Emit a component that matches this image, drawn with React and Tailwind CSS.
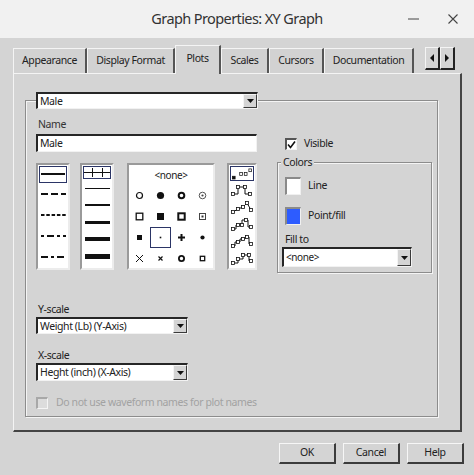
import React from 'react';

const tabs = [
  { label: 'Appearance', w: 'w-[74px]' },
  { label: 'Display Format', w: 'w-[88px]' },
  { label: 'Plots', w: 'w-[46px]', active: true },
  { label: 'Scales', w: 'w-[48px]' },
  { label: 'Cursors', w: 'w-[55px]' },
  { label: 'Documentation', w: 'w-[90px]' },
];

function DownArrow() {
  return (
    <svg width="7" height="4" viewBox="0 0 7 4">
      <path d="M0 0h7L3.5 4z" fill="#111" />
    </svg>
  );
}

function Dropdown({ text, className }) {
  return (
    <div className={`flex bg-white border-t-2 border-l-2 border-r border-b border-t-[#262626] border-l-[#262626] border-r-[#f2f2f2] border-b-[#f2f2f2] ${className}`}>
      <span className="flex-1 self-center truncate pl-[2px] leading-[13px]">{text}</span>
      <div className="flex w-[14px] shrink-0 items-center justify-center border border-t-[#f4f4f4] border-l-[#f4f4f4] border-r-[#3a3a3a] border-b-[#3a3a3a] bg-[#d4d4d4]">
        <DownArrow />
      </div>
    </div>
  );
}

function Check({ checked, disabled }) {
  return (
    <div className={`flex h-[12px] w-[12px] shrink-0 items-center justify-center border-t-2 border-l-2 border-r border-b border-r-[#f4f4f4] border-b-[#f4f4f4] ${disabled ? 'border-t-[#a8a8a8] border-l-[#a8a8a8] bg-[#dcdcdc]' : 'border-t-[#555] border-l-[#555] bg-white'}`}>
      {checked && (
        <svg width="9" height="8" viewBox="0 0 9 8">
          <path d="M1 3.5 L3.5 6.5 L8 0.5" fill="none" stroke="#111" strokeWidth="1.6" />
        </svg>
      )}
    </div>
  );
}

// h and y chosen so lines land on whole pixels
function Dash({ dash, w = 26, sw = 2, h = 5, y = 2 }) {
  return (
    <svg width={w} height={h} viewBox={`0 0 ${w} ${h}`}>
      <line x1="0" y1={y} x2={w} y2={y} stroke="#111" strokeWidth={sw} strokeDasharray={dash} />
    </svg>
  );
}

const sunken = 'border-2 border-t-[#9a9a9a] border-l-[#9a9a9a] border-r-[#ececec] border-b-[#ececec] bg-white overflow-hidden';

function LineStyles() {
  return (
    <div className={`flex w-[34px] flex-col ${sunken}`}>
      <div className="flex h-[19px] items-center justify-center p-px">
        <div className="flex h-full w-full items-center justify-center border border-[#2b3566]">
          <Dash dash="" w={24} />
        </div>
      </div>
      {['7 3', '3.5 1.8', '3 3 7 3', '7 3 3 3'].map((d) => (
        <div key={d} className="flex h-[21px] items-center justify-center">
          <Dash dash={d} w={25} />
        </div>
      ))}
    </div>
  );
}

function LineWidths() {
  return (
    <div className={`flex w-[34px] flex-col ${sunken}`}>
      <div className="flex h-[15px] items-center justify-center p-px">
        <div className="flex h-full w-full items-center justify-center border border-[#2b3566]">
          <svg width="26" height="11" viewBox="0 0 26 11">
            <line x1="0" y1="5.5" x2="26" y2="5.5" stroke="#111" strokeWidth="1" />
            <line x1="8.5" y1="1" x2="8.5" y2="10" stroke="#111" strokeWidth="1" />
            <line x1="18.5" y1="1" x2="18.5" y2="10" stroke="#111" strokeWidth="1" />
          </svg>
        </div>
      </div>
      {[1, 2, 3, 4, 5].map((s) => (
        <div key={s} className="flex h-[17px] items-center justify-center">
          <Dash dash="" w={25} sw={s} h={7} y={s % 2 ? 3.5 : 3} />
        </div>
      ))}
    </div>
  );
}

const symbols = [
  <circle cx="10.5" cy="10.5" r="3" fill="none" stroke="#111" strokeWidth="1.2" />,
  <circle cx="10.5" cy="10.5" r="3.6" fill="#111" />,
  <circle cx="10.5" cy="10.5" r="2.8" fill="none" stroke="#111" strokeWidth="2" />,
  <g><circle cx="10.5" cy="10.5" r="3.3" fill="none" stroke="#555" strokeWidth="1" /><circle cx="10.5" cy="10.5" r="1.1" fill="#444" /></g>,
  <rect x="7.2" y="7.2" width="6.6" height="6.6" fill="none" stroke="#111" strokeWidth="1.3" />,
  <rect x="7" y="7" width="7" height="7" fill="#111" />,
  <rect x="7.3" y="7.3" width="6.4" height="6.4" fill="none" stroke="#111" strokeWidth="2" />,
  <g><rect x="7.5" y="7.5" width="6" height="6" fill="none" stroke="#444" strokeWidth="1" /><rect x="9.5" y="9.5" width="2" height="2" fill="#333" /></g>,
  <rect x="8" y="8" width="5" height="5" fill="#111" />,
  <rect x="9.7" y="9.7" width="1.6" height="1.6" fill="#111" />,
  <path d="M10.5 7v7M7 10.5h7" stroke="#111" strokeWidth="2" />,
  <circle cx="10.5" cy="10.5" r="2.1" fill="#111" />,
  <path d="M7 7l7 7M14 7l-7 7" stroke="#111" strokeWidth="1" />,
  <path d="M8.5 8.5l4 4M12.5 8.5l-4 4" stroke="#111" strokeWidth="1.2" />,
  <circle cx="10.5" cy="10.5" r="2.6" fill="none" stroke="#111" strokeWidth="1.8" />,
  <rect x="8.3" y="8.3" width="4.4" height="4.4" fill="none" stroke="#111" strokeWidth="1.3" />,
];

function PointStyles() {
  return (
    <div className={`flex w-[88px] flex-col ${sunken}`}>
      <div className="flex h-[20px] shrink-0 items-center justify-center text-[10px] text-[#222]">&lt;none&gt;</div>
      <div className="grid grid-cols-4">
        {symbols.map((s, i) => (
          <div key={i} className={`h-[21px] w-[21px] ${i === 9 ? 'border border-[#2b3566]' : ''}`}>
            <svg width="21" height="21" viewBox="0 0 21 21" className={i === 9 ? '-m-px' : ''}>{s}</svg>
          </div>
        ))}
      </div>
    </div>
  );
}

const interps = [
  { pts: [[3, 12], [11, 8], [16, 8], [21, 4]] },
  { pts: [[3, 11], [8, 4], [15, 4], [20, 11]], path: 'M3 11H8V4H15V11H21' },
  { pts: [[3, 12], [8, 9], [13, 7], [17, 3], [21, 10]], path: 'M3 12L8 9L13 7L17 3L21 10' },
  { pts: [[3, 12], [8, 8], [12, 8], [16, 3], [21, 10]], path: 'M3 12H6V8H12V3H18V10H21' },
  { pts: [[3, 12], [8, 8], [13, 5], [17, 3], [21, 10]], path: 'M3 12H5V8H10V5H15V3H19V10H21' },
  { pts: [[3, 12], [8, 8], [13, 4], [19, 4], [21, 10]], path: 'M3 12H8V8H13V4H19V10H21' },
];

function Interp() {
  return (
    <div className={`flex w-[30px] flex-col ${sunken}`}>
      {interps.map((it, i) => (
        <div key={i} className={`flex h-[17px] items-center justify-center ${i === 0 ? 'p-px' : ''}`}>
          <div className={`flex h-full w-full items-center justify-center ${i === 0 ? 'border border-[#2b3566]' : ''}`}>
            <svg width="24" height="15" viewBox="0 0 24 15">
              {it.path && <path d={it.path} fill="none" stroke="#111" strokeWidth="1" />}
              {it.pts.map(([x, y], j) => (
                <rect key={j} x={x - 1.5} y={y - 1.5} width="3" height="3" fill={i === 0 && j === 0 ? '#111' : '#fff'} stroke="#111" strokeWidth="0.8" />
              ))}
            </svg>
          </div>
        </div>
      ))}
    </div>
  );
}

function Swatch({ color }) {
  return <div className={`h-[18px] w-[16px] shrink-0 border-t-2 border-l-2 border-r border-b border-t-[#8a8a8a] border-l-[#8a8a8a] border-r-[#f0f0f0] border-b-[#f0f0f0] ${color}`} />;
}

function Button({ children }) {
  return (
    <div className="flex h-[21px] w-[57px] items-center justify-center border-t border-l border-r-2 border-b-2 border-t-[#f6f6f6] border-l-[#f6f6f6] border-r-[#3c3c3c] border-b-[#3c3c3c] bg-[#d4d4d4] text-[#222]">
      {children}
    </div>
  );
}

export default function App() {
  return (
    <div className="flex h-[475px] w-[474px] flex-col overflow-hidden bg-[#d4d4d4] font-['Noto_Sans','DejaVu_Sans',sans-serif] text-[10.5px] tracking-[-0.4px] text-[#222]">
      {/* title bar */}
      <div className="flex h-[38px] shrink-0 items-center bg-[#f1f1f1]">
        <div className="w-[80px]" />
        <div className="flex-1 text-center text-[14.5px] tracking-[-0.6px] text-[#333]">Graph Properties: XY Graph</div>
        <div className="flex w-[80px] items-center gap-[29px] pl-[14px]">
          <svg width="11" height="2" viewBox="0 0 11 2"><line x1="0" y1="1" x2="11" y2="1" stroke="#444" strokeWidth="1" /></svg>
          <svg width="10" height="10" viewBox="0 0 10 10"><path d="M0.5 0.5l9 9M9.5 0.5l-9 9" stroke="#444" strokeWidth="1.1" /></svg>
        </div>
      </div>

      <div className="flex flex-col pl-[13px] pt-[7px]">
        {/* tabs */}
        <div className="relative z-10 flex h-[28px] items-end">
          {tabs.map((t) => (
            <div
              key={t.label}
              className={`flex ${t.w} items-center justify-center border-t border-l border-r-2 border-t-[#f4f4f4] border-l-[#f4f4f4] border-r-[#555] ${t.active ? 'h-[29px] -mb-px bg-[#d4d4d4] pb-[3px]' : 'h-[25px] bg-[#d2d2d2]'}`}
            >
              {t.label}
            </div>
          ))}
          <div className="mb-[3px] ml-[11px] flex h-[23px] self-end">
            {['M5 0v8L1 4z', 'M1 0v8l4-4z'].map((d) => (
              <div key={d} className="flex w-[15px] items-center justify-center border border-t-[#f4f4f4] border-l-[#f4f4f4] border-r-2 border-b-2 border-r-[#222] border-b-[#222] bg-[#d4d4d4]">
                <svg width="6" height="8" viewBox="0 0 6 8"><path d={d} fill="#111" /></svg>
              </div>
            ))}
          </div>
        </div>

        {/* tab panel */}
        <div className="h-[359px] w-[449px] border-t border-l border-r-2 border-b-2 border-t-[#f4f4f4] border-l-[#f4f4f4] border-r-[#444] border-b-[#444] pl-[11px] pt-[26px]">
          {/* plot group */}
          <div className="relative h-[317px] w-[413px] border border-[#8c8c8c] pl-[10px] pt-[15px] shadow-[inset_1px_1px_0_#f4f4f4,1px_1px_0_#f4f4f4]">
            <Dropdown text="Male" className="absolute left-[10px] top-[-9px] h-[17px] w-[222px]" />

            <div className="flex">
              <div className="flex w-[222px] flex-col">
                <div className="h-[16px] pl-[2px] leading-[16px] text-[#333]">Name</div>
                <div className="mt-[2px] flex h-[18px] w-[221px] items-center border-t-2 border-l-2 border-r border-b border-t-[#262626] border-l-[#262626] border-r-[#f2f2f2] border-b-[#f2f2f2] bg-white pl-[2px]">
                  Male
                </div>
                <div className="mt-[11px] flex h-[107px]">
                  <LineStyles />
                  <div className="ml-[10px] flex"><LineWidths /></div>
                  <div className="ml-[13px] flex"><PointStyles /></div>
                  <div className="ml-[12px] flex"><Interp /></div>
                </div>
              </div>

              <div className="ml-[19px] flex flex-col">
                <div className="mt-[22px] flex h-[12px] items-center pl-[8px]">
                  <Check checked />
                  <span className="ml-[7px]">Visible</span>
                </div>
                <div className="relative mt-[12px] flex h-[111px] w-[155px] flex-col border border-[#8c8c8c] pl-[7px] pt-[14px] shadow-[inset_1px_1px_0_#f4f4f4,1px_1px_0_#f4f4f4]">
                  <span className="absolute left-[3px] top-[-8px] bg-[#d4d4d4] px-[2px] leading-[14px]">Colors</span>
                  <div className="flex items-center">
                    <Swatch color="bg-white" />
                    <span className="ml-[7px]">Line</span>
                  </div>
                  <div className="mt-[12px] flex items-center">
                    <Swatch color="bg-[#2d5cff]" />
                    <span className="ml-[7px]">Point/fill</span>
                  </div>
                  <div className="mt-[6px] h-[16px] leading-[16px]">Fill to</div>
                  <Dropdown text="<none>" className="-ml-[3px] h-[20px] w-[130px] text-[10px]" />
                </div>
              </div>
            </div>

            <div className="mt-[28px] h-[16px] pl-[2px] leading-[16px]">Y-scale</div>
            <Dropdown text="Weight (Lb) (Y-Axis)" className="h-[17px] w-[152px]" />
            <div className="mt-[14px] h-[15px] pl-[2px] leading-[15px]">X-scale</div>
            <Dropdown text="Heght (inch) (X-Axis)" className="h-[18px] w-[152px]" />
            <div className="mt-[16px] flex h-[12px] items-center">
              <Check disabled />
              <span className="ml-[8px] text-[#a2a2a2]">Do not use waveform names for plot names</span>
            </div>
          </div>
        </div>

        {/* buttons */}
        <div className="mt-[11px] flex gap-[7px] pl-[266px]">
          <Button>OK</Button>
          <Button>Cancel</Button>
          <Button>Help</Button>
        </div>
      </div>
    </div>
  );
}
